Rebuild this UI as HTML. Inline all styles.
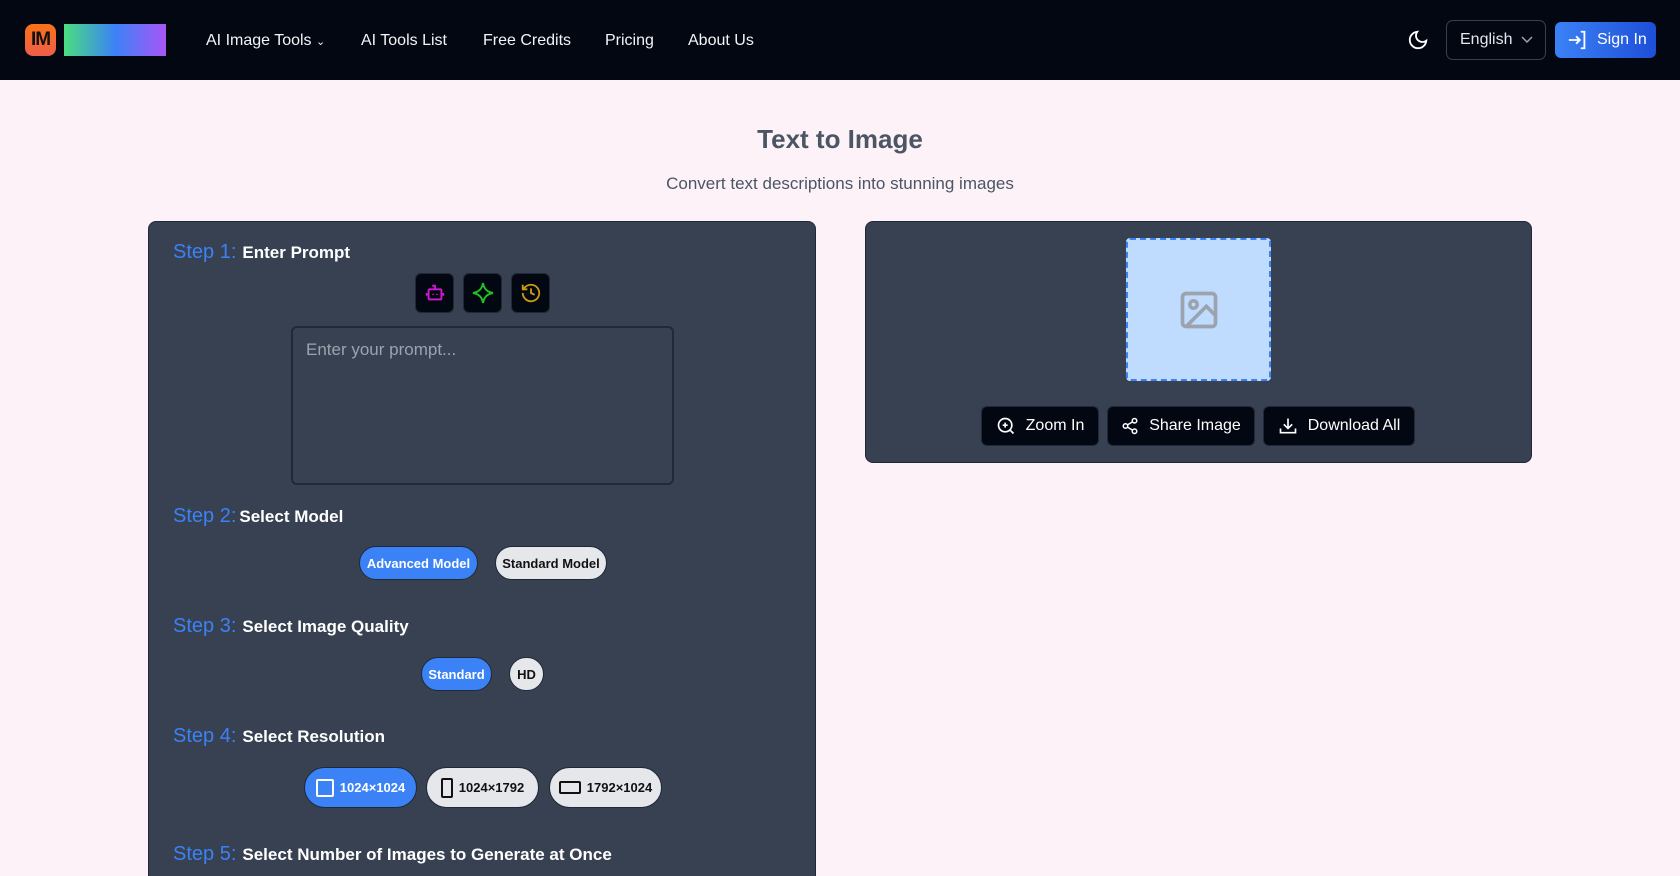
<!DOCTYPE html>
<html style="width:1680px;height:876px;overflow:hidden"><head><meta charset="utf-8"><style>
*{box-sizing:border-box;margin:0;padding:0}
body{width:1680px;height:876px;overflow:hidden;background:#fdf2f8;font-family:"Liberation Sans",sans-serif;position:relative}
.hdr{position:absolute;left:0;top:0;width:1680px;height:80px;background:#030712}
.abs{position:absolute}
.nav{position:absolute;top:29px;color:#f3f4f6;font-size:16px;line-height:24px}
.panel{position:absolute;background:#374151;border:1px solid #1f2937;border-radius:8px}
.step{position:absolute;left:24px;font-size:20px;color:#3b82f6;line-height:24px;white-space:nowrap}
.step b{color:#fff;font-size:17px;font-weight:bold;margin-left:6px}
.ib{position:absolute;top:51px;width:39px;height:40px;background:#030712;border:1px solid #1f2937;border-radius:6px;display:flex;align-items:center;justify-content:center}
.pill{position:absolute;border-radius:999px;font-size:13px;font-weight:bold;display:flex;align-items:center;justify-content:center;gap:6px;border:1px solid #1f2937}
.on{background:#3b82f6;color:#fff}.off{background:#e5e7eb;color:#111}
.btn{position:absolute;top:184px;height:40px;background:#030712;border:1px solid #1f2937;border-radius:6px;color:#fff;font-size:16px;display:flex;align-items:center;justify-content:center;gap:10px}
</style></head><body>
<div class="hdr">
 <div class="abs" style="left:25px;top:24px;width:31px;height:32px;border-radius:8px;background:linear-gradient(#f97316,#ef5d4a);color:#111;font-weight:bold;font-size:19px;line-height:32px;text-align:center;letter-spacing:-1px">IM</div>
 <div class="abs" style="left:64px;top:24px;width:102px;height:32px;background:linear-gradient(90deg,#4ade80,#3b82f6 50%,#a855f7)"></div>
 <div class="nav" style="left:206px">AI Image Tools <span style="font-size:11px">&#8964;</span></div>
 <div class="nav" style="left:361px">AI Tools List</div>
 <div class="nav" style="left:483px">Free Credits</div>
 <div class="nav" style="left:605px">Pricing</div>
 <div class="nav" style="left:688px">About Us</div>
 <svg class="abs" style="left:1407px;top:29px" width="22" height="22" viewBox="0 0 24 24" fill="none" stroke="#fff" stroke-width="2"><path d="M21 12.8A9 9 0 1 1 11.2 3a7 7 0 0 0 9.8 9.8z"/></svg>
 <div class="abs" style="left:1446px;top:20px;width:100px;height:40px;border:1px solid #374151;border-radius:7px;color:#e5e7eb;font-size:16px;line-height:38px;padding-left:13px">English<svg style="position:absolute;right:12px;top:15px" width="12" height="8" viewBox="0 0 12 8" fill="none" stroke="#9ca3af" stroke-width="1.5"><path d="M1 1l5 5 5-5"/></svg></div>
 <div class="abs" style="left:1555px;top:22px;width:101px;height:36px;border-radius:6px;background:linear-gradient(90deg,#3b82f6,#1d4ed8);color:#fff;font-size:16px;line-height:36px;padding-left:42px">Sign In<svg style="position:absolute;left:12px;top:7px" width="22" height="22" viewBox="0 0 24 24" fill="none" stroke="#fff" stroke-width="2"><path d="M15 3h4v18h-4M2 12h12M10 8l4 4-4 4"/></svg></div>
</div>
<div class="abs" style="left:0;width:1680px;top:124px;text-align:center;font-size:26px;font-weight:bold;color:#4b5563">Text to Image</div>
<div class="abs" style="left:0;width:1680px;top:174px;text-align:center;font-size:17px;color:#4b5563">Convert text descriptions into stunning images</div>

<div class="panel" style="left:148px;top:221px;width:668px;height:655px;border-bottom:none;border-radius:8px 8px 0 0">
 <div class="step" style="top:18px">Step 1:<b>Enter Prompt</b></div>
 <div class="ib" style="left:266px"><svg width="22" height="22" viewBox="0 0 24 24" fill="none" stroke="#d11ad1" stroke-width="2"><rect x="5" y="8" width="14" height="11" rx="1"/><path d="M12 8V4h-3M3 12v3M21 12v3M10 13v1M14 13v1"/></svg></div>
 <div class="ib" style="left:314px"><svg width="24" height="24" viewBox="0 0 24 24" fill="none" stroke="#22c022" stroke-width="2"><path d="M12 2c1 6 4 9 10 10-6 1-9 4-10 10-1-6-4-9-10-10 6-1 9-4 10-10z"/></svg></div>
 <div class="ib" style="left:362px"><svg width="22" height="22" viewBox="0 0 24 24" fill="none" stroke="#ca9a10" stroke-width="2"><path d="M3 12a9 9 0 1 0 3-6.7L3 8M3 3v5h5M12 7v5l4 2"/></svg></div>
 <div class="abs" style="left:142px;top:104px;width:383px;height:159px;border:2px solid #1f2937;border-radius:6px;color:#9ca3af;font-size:17px;padding:12px 13px">Enter your prompt...</div>
 <div class="step" style="top:282px">Step 2:<b style="margin-left:3px">Select Model</b></div>
 <div class="pill on" style="left:210px;top:324px;width:119px;height:34px">Advanced Model</div>
 <div class="pill off" style="left:346px;top:324px;width:112px;height:34px">Standard Model</div>
 <div class="step" style="top:392px">Step 3:<b>Select Image Quality</b></div>
 <div class="pill on" style="left:272px;top:435px;width:71px;height:34px">Standard</div>
 <div class="pill off" style="left:360px;top:435px;width:35px;height:34px">HD</div>
 <div class="step" style="top:502px">Step 4:<b>Select Resolution</b></div>
 <div class="pill on" style="left:155px;top:545px;width:113px;height:41px"><span style="width:18px;height:18px;border:2px solid #fff;border-radius:2px"></span>1024×1024</div>
 <div class="pill off" style="left:277px;top:545px;width:113px;height:41px"><span style="width:12px;height:20px;border:2px solid #111;border-radius:2px"></span>1024×1792</div>
 <div class="pill off" style="left:400px;top:545px;width:113px;height:41px"><span style="width:22px;height:13px;border:2px solid #111;border-radius:2px"></span>1792×1024</div>
 <div class="step" style="top:620px">Step 5:<b>Select Number of Images to Generate at Once</b></div>
</div>

<div class="panel" style="left:865px;top:221px;width:667px;height:242px">
 <div class="abs" style="left:260px;top:16px;width:145px;height:143px;background:#bfdbfe;border:2px dashed #3b82f6;border-radius:4px;display:flex;align-items:center;justify-content:center"><svg width="44" height="44" viewBox="0 0 24 24" fill="none" stroke="#9ca3af" stroke-width="2"><rect x="3" y="3" width="18" height="18" rx="2"/><circle cx="9" cy="9" r="2"/><path d="M5 21L16 10l5 5"/></svg></div>
 <div class="btn" style="left:115px;width:118px"><svg width="20" height="20" viewBox="0 0 24 24" fill="none" stroke="#fff" stroke-width="2"><circle cx="11" cy="11" r="8"/><path d="M21 21l-4.3-4.3M11 8v6M8 11h6"/></svg>Zoom In</div>
 <div class="btn" style="left:241px;width:148px"><svg width="18" height="18" viewBox="0 0 24 24" fill="none" stroke="#fff" stroke-width="2"><circle cx="18" cy="5" r="3"/><circle cx="6" cy="12" r="3"/><circle cx="18" cy="19" r="3"/><path d="M8.6 13.5l6.8 4M15.4 6.5l-6.8 4"/></svg>Share Image</div>
 <div class="btn" style="left:397px;width:152px"><svg width="20" height="20" viewBox="0 0 24 24" fill="none" stroke="#fff" stroke-width="2"><path d="M12 3v12M7 10l5 5 5-5M3 15v5h18v-5"/></svg>Download All</div>
</div>
</body></html>
